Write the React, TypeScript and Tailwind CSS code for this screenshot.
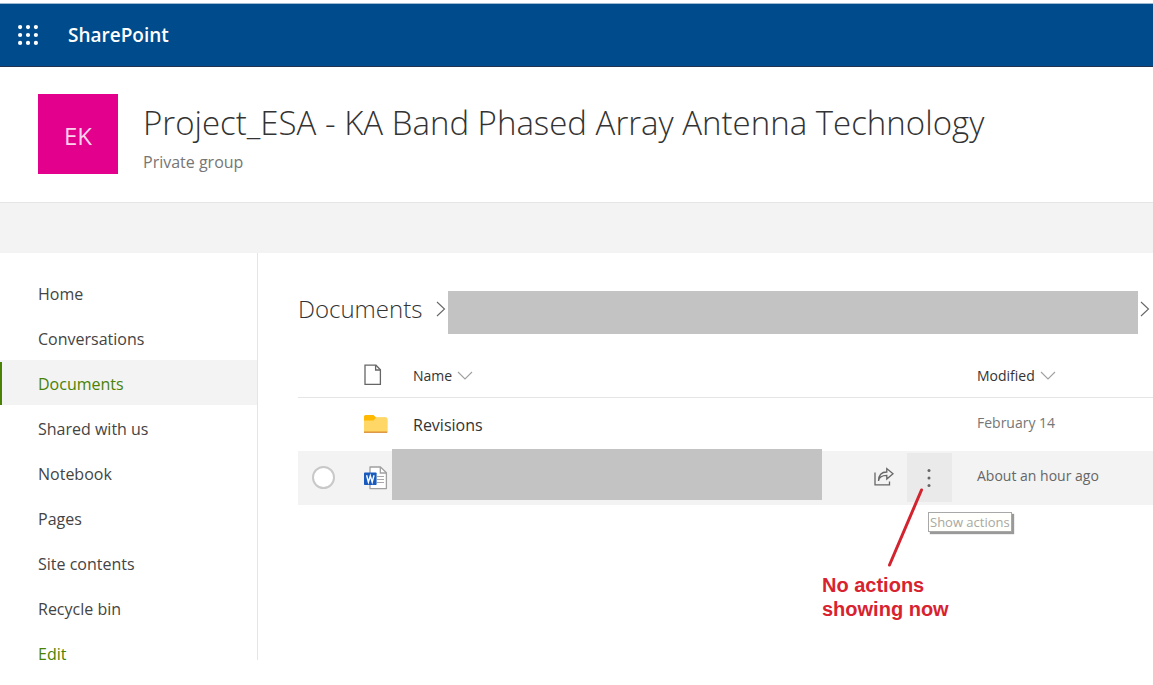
import type { ReactNode } from "react";

type NavItem = { label: string; active?: boolean; accent?: boolean };

const navItems: NavItem[] = [
  { label: "Home" },
  { label: "Conversations" },
  { label: "Documents", active: true, accent: true },
  { label: "Shared with us" },
  { label: "Notebook" },
  { label: "Pages" },
  { label: "Site contents" },
  { label: "Recycle bin" },
  { label: "Edit", accent: true },
];

function WaffleIcon() {
  const steps = [2, 9.5, 17];
  return (
    <svg width="20" height="20" viewBox="0 0 19 19" fill="#fff" aria-hidden="true">
      {steps.map((y) => steps.map((x) => <circle key={`${x}-${y}`} cx={x} cy={y} r="2" />))}
    </svg>
  );
}

function ChevronRight() {
  return (
    <svg width="10" height="18" viewBox="0 0 10 18" fill="none" stroke="#666" strokeWidth="1.1" className="shrink-0" aria-hidden="true">
      <path d="M1 2 L8.5 9 L1 16" />
    </svg>
  );
}

function ChevronDown() {
  return (
    <svg width="16" height="10" viewBox="0 0 16 10" fill="none" stroke="#a0a0a0" strokeWidth="1.1" aria-hidden="true">
      <path d="M1 1 L8 8 L15 1" />
    </svg>
  );
}

function FileIcon() {
  return (
    <svg width="24" height="22" viewBox="0 0 24 22" fill="none" stroke="#666" strokeWidth="1.3" aria-hidden="true">
      <path d="M1 1.2 H12 L16.4 5.8 V20.4 H1 Z" />
      <path d="M11.6 1.2 V6 H16.4" />
    </svg>
  );
}

function FolderIcon() {
  return (
    <svg width="24" height="20" viewBox="0 0 24 20" aria-hidden="true">
      <path d="M0 2.5 Q0 1 1.5 1 H9.5 L12 3.5 H22 Q23.3 3.5 23.3 5 V18 H0 Z" fill="#ffb900" />
      <path d="M0 6.5 H9.5 L12 3.8 H22 Q23.3 3.8 23.3 5 V18 H0 Z" fill="#ffd766" />
      <path d="M0 17.6 H23.3 V18.8 H0 Z" fill="#d67f1c" />
    </svg>
  );
}

function WordIcon() {
  return (
    <svg width="24" height="24" viewBox="0 0 24 24" aria-hidden="true">
      <path d="M6 1 H16.5 L22.4 6.8 V22.6 H6 Z" fill="#fff" stroke="#a0a0a0" strokeWidth="1.3" strokeLinejoin="round" />
      <path d="M16.3 1 V7 H22.4" fill="none" stroke="#a0a0a0" strokeWidth="1.3" />
      <path d="M13 10.5 H20 M13 13.5 H20 M13 16.5 H20" stroke="#a8a8a8" strokeWidth="1.1" />
      <rect x="0" y="6.5" width="12.6" height="12.6" rx="0.8" fill="#185abd" />
      <path d="M2.6 9.3 L4.4 16.2 L6.3 9.8 L8.2 16.2 L10 9.3" fill="none" stroke="#fff" strokeWidth="1.4" />
    </svg>
  );
}

function ShareIcon() {
  return (
    <svg width="20" height="20" viewBox="0 0 20 20" fill="none" stroke="#666" strokeWidth="1.3" aria-hidden="true">
      <path d="M1 5.5 V17.8 H15.5 V14.5" />
      <path d="M4.5 14 C5.2 9.6 8 8.4 12.8 8.4 V12 L19 6.8 L12.8 1.6 V5 C7.6 5 4.6 8 4.5 14 Z" />
    </svg>
  );
}

function DotsIcon() {
  return (
    <svg width="6" height="20" viewBox="0 0 6 20" fill="#666" aria-hidden="true">
      <circle cx="3" cy="2.5" r="1.5" />
      <circle cx="3" cy="10" r="1.5" />
      <circle cx="3" cy="17.5" r="1.5" />
    </svg>
  );
}

function SortButton({ children }: { children: ReactNode }) {
  return (
    <button type="button" className="flex items-center gap-[5px] text-sm text-[#333]">
      {children}
      <ChevronDown />
    </button>
  );
}

function TopBar() {
  return (
    <header className="mt-1 flex h-[63px] items-center border-b border-[#22344f] bg-[#004b8b] pl-[18px] shadow-[0_-1px_0_#9fb9d3]">
      <button type="button" aria-label="App launcher">
        <WaffleIcon />
      </button>
      <a href="#sharepoint" className="ml-[30px] text-[19px] leading-7 font-semibold text-white">
        SharePoint
      </a>
    </header>
  );
}

function SiteHeader() {
  return (
    <section className="flex gap-[25px] border-b border-[#e5e5e5] px-[38px] pt-[27px] pb-7">
      <div className="flex size-20 shrink-0 items-center justify-center bg-[#e3008c] pt-1 text-2xl text-[#fbd3ec]">EK</div>
      <div className="min-w-0 pt-1">
        <h1 className="mb-0.5 text-[33px] leading-[50px] font-light whitespace-nowrap text-[#333]">
          Project_ESA - KA Band Phased Array Antenna Technology
        </h1>
        <p className="text-base leading-6 text-[#767676]">Private group</p>
      </div>
    </section>
  );
}

function SideNav() {
  return (
    <nav className="w-[258px] shrink-0 border-r border-[#e5e5e5] pt-[17px]">
      <ul className="-mb-[15px]">
        {navItems.map((item) => (
          <li key={item.label} className={item.active ? "bg-[#f3f3f3] pt-0.5" : "pt-0.5"}>
            <a
              href={`#${item.label}`}
              aria-current={item.active ? "page" : undefined}
              className={
                "flex h-[43px] items-center border-l-2 pl-9 text-base " +
                (item.active ? "border-[#498205] " : "border-transparent ") +
                (item.accent ? "text-[#498205]" : "text-[#444]")
              }
            >
              {item.label}
            </a>
          </li>
        ))}
      </ul>
    </nav>
  );
}

function ActionsCell() {
  return (
    <div className="relative">
      <button
        type="button"
        aria-label="Show actions"
        className="flex h-[49px] w-[45px] items-center justify-center bg-[#eaeaea] pr-px"
      >
        <DotsIcon />
      </button>
      <div
        role="tooltip"
        className="absolute top-[59px] left-[21px] border border-[#a8a8a8] bg-[#fffffb] px-px text-[13px] leading-[18px] whitespace-nowrap text-[#a8a8a4] shadow-[2px_2px_1px_#999]"
      >
        Show actions
      </div>
      <svg width="40" height="82" viewBox="0 0 40 82" className="absolute top-[34px] left-[-20px]" aria-hidden="true">
        <path d="M2.5 78 L34.5 3" stroke="#d2232f" strokeWidth="3" strokeLinecap="round" />
      </svg>
      <p className="absolute top-[120px] left-[-85px] font-['Liberation_Sans',Arial,sans-serif] text-xl leading-6 font-bold whitespace-nowrap text-[#d8232f]">
        No actions
        <br />
        showing now
      </p>
    </div>
  );
}

function DocumentTable() {
  return (
    <table className="mt-[19px] w-full table-fixed border-collapse text-left">
      <colgroup>
        <col className="w-[66px]" />
        <col className="w-[49px]" />
        <col />
        <col className="w-[47px]" />
        <col className="w-[70px]" />
        <col className="w-[176px]" />
      </colgroup>
      <thead>
        <tr className="h-11 border-b border-[#e5e5e5]">
          <td />
          <th scope="col" aria-label="File type">
            <FileIcon />
          </th>
          <th scope="col" className="pt-0.5 font-normal">
            <SortButton>Name</SortButton>
          </th>
          <td />
          <td />
          <th scope="col" className="pt-0.5 font-normal">
            <SortButton>Modified</SortButton>
          </th>
        </tr>
      </thead>
      <tbody>
        <tr className="h-[54px]">
          <td />
          <td>
            <FolderIcon />
          </td>
          <td className="pt-0.5">
            <a href="#revisions" className="text-base text-[#333]">
              Revisions
            </a>
          </td>
          <td />
          <td />
          <td className="pb-0.5 text-sm text-[#767676]">February 14</td>
        </tr>
        <tr className="h-[54px] bg-[#f3f3f3]">
          <td className="pb-0.5">
            <input
              type="checkbox"
              aria-label="Select document"
              className="ml-[14px] block size-[23px] appearance-none rounded-full border-2 border-[#c8c8c8] bg-white"
            />
          </td>
          <td>
            <WordIcon />
          </td>
          <td className="pr-[38px] align-top">
            <div className="-mt-0.5 -ml-[21px] h-[51px] bg-[#c3c3c3]" />
          </td>
          <td className="pb-0.5">
            <button type="button" aria-label="Share" className="ml-[14px] block">
              <ShareIcon />
            </button>
          </td>
          <td className="pt-0.5 align-top">
            <ActionsCell />
          </td>
          <td className="pb-1 text-sm text-[#666]">About an hour ago</td>
        </tr>
      </tbody>
    </table>
  );
}

export default function App() {
  return (
    <div className="flow-root bg-white font-['Open_Sans','Noto_Sans',sans-serif]">
      <TopBar />
      <SiteHeader />
      <div className="h-[50px] bg-[#f3f3f3]" />
      <div className="flex">
        <SideNav />
        <main className="min-w-0 flex-1 pt-[38px] pl-10">
          <div className="flex items-start pr-[3px]">
            <div className="flex h-9 items-center gap-[14px]">
              <a href="#documents" className="text-2xl font-light text-[#333]">
                Documents
              </a>
              <ChevronRight />
            </div>
            <div className="mx-0.5 h-[43px] flex-1 bg-[#c3c3c3]" />
            <div className="flex h-9 items-center">
              <ChevronRight />
            </div>
          </div>
          <DocumentTable />
        </main>
      </div>
    </div>
  );
}
